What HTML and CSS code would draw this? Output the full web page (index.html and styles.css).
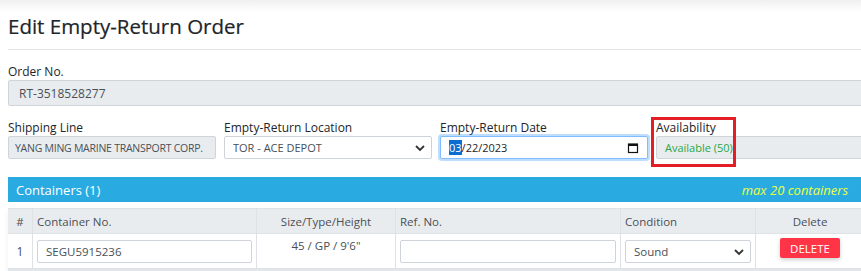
FILE: index.html
```html
<!DOCTYPE html>
<html lang="en">
  <head>
    <meta charset="UTF-8" />
    <meta name="viewport" content="width=device-width, initial-scale=1.0" />
    <title>Edit Empty-Return Order</title>
    <link rel="stylesheet" href="styles.css">
  </head>
  <body>
    <!-- shadow of the top navbar -->
    <div class="top-shade"></div>

    <div class="page">
      <h3 class="title">Edit Empty-Return Order</h3>
      <hr class="divider" />

      <div class="field">
        <label class="label">Order No.</label>
        <input class="input input-lg" type="text" value="RT-3518528277" readonly />
      </div>

      <div class="form-row">
        <div class="field">
          <label class="label">Shipping Line</label>
          <input class="input tight" type="text" value="YANG MING MARINE TRANSPORT CORP." readonly />
        </div>
        <div class="field">
          <label class="label">Empty-Return Location</label>
          <div class="select-wrap">
            <select class="input select">
              <option>TOR - ACE DEPOT</option>
            </select>
            <svg class="chevron" width="12" height="12" viewBox="0 0 12 12"><path d="M2 4l4 4 4-4" fill="none" stroke="#333" stroke-width="1.8"/></svg>
          </div>
        </div>
        <div class="field">
          <label class="label">Empty-Return Date</label>
          <div class="input date focused">
            <span><span class="seg-sel">03</span>/22/2023</span>
            <svg class="cal" width="12" height="12" viewBox="0 0 12 12">
              <rect x="1.5" y="2" width="9" height="8.5" fill="none" stroke="#111" stroke-width="1.2"/>
              <rect x="1.5" y="2" width="9" height="2" fill="#111"/>
            </svg>
          </div>
        </div>
        <div class="field highlight">
          <label class="label">Availability</label>
          <div class="input readonly-box available">Available (50)</div>
          <!-- red annotation box -->
          <div class="mark"></div>
        </div>
      </div>

      <div class="bar">
        <span class="bar-title">Containers (1)</span>
        <span class="bar-note">max 20 containers</span>
      </div>

      <div class="table-card">
        <table class="grid">
          <thead>
            <tr>
              <th class="c-num">#</th>
              <th class="c-cont">Container No.</th>
              <th class="c-size center">Size/Type/Height</th>
              <th class="c-ref">Ref. No.</th>
              <th class="c-cond">Condition</th>
              <th class="c-del center">Delete</th>
            </tr>
          </thead>
          <tbody>
            <tr>
              <td class="c-num">1</td>
              <td><input class="input cell-input" type="text" value="SEGU5915236" /></td>
              <td class="center size-text">45 / GP / 9'6"</td>
              <td><input class="input cell-input" type="text" value="" /></td>
              <td>
                <div class="select-wrap">
                  <select class="input select cell-input">
                    <option>Sound</option>
                  </select>
                  <svg class="chevron" width="12" height="12" viewBox="0 0 12 12"><path d="M2 4l4 4 4-4" fill="none" stroke="#333" stroke-width="1.8"/></svg>
                </div>
              </td>
              <td class="center del-cell"><button class="btn-delete">DELETE</button></td>
            </tr>
          </tbody>
        </table>
      </div>
    </div>
  </body>
</html>
```

FILE: styles.css
```css
html,
body {
  margin: 0;
  overflow: hidden;
}

body {
  background-color: white;
  color: #212529;
  font-family: "Open Sans", "Noto Sans", sans-serif;
  font-size: 12px;
}

/* navbar shadow at the very top */
.top-shade {
  height: 12px;
  background: linear-gradient(#f0f0f0, #ffffff);
}

.page {
  width: 856px;
  padding: 0 8px;
}

.title {
  margin: 2px 0 0;
  font-size: 20.5px;
  font-weight: 500;
  line-height: 24px;
  color: #212529;
  -webkit-text-stroke: 0.2px #212529;
}

.divider {
  margin: 11px 0 14px;
  border: 0;
  border-top: 1px solid #e3e3e3;
}

/* Form fields */
.field {
  display: flex;
  flex-direction: column;
}

.label {
  font-size: 12px;
  line-height: 15px;
  margin-bottom: 1px;
  color: #212529;
}

.input {
  box-sizing: border-box;
  height: 23px;
  width: 100%;
  margin: 0;
  padding: 0 8px;
  border: 1px solid #ced4da;
  border-radius: 2px;
  background-color: white;
  color: #495057;
  font-family: inherit;
  font-size: 11px;
  outline: none;
}

.input[readonly],
.readonly-box {
  background-color: #e9ecef;
}

.input-lg {
  height: 26px;
  padding: 0 10px;
  font-size: 12px;
}

.tight {
  padding: 0 6px;
  font-size: 10.5px;
  letter-spacing: -0.25px;
}

.form-row {
  display: grid;
  grid-template-columns: repeat(4, 1fr);
  grid-gap: 8px;
  margin-top: 14px;
}

.readonly-box {
  display: flex;
  align-items: center;
}

.available {
  color: #28a745;
}

/* selects with a chevron */
.select-wrap {
  position: relative;
}

.select {
  -webkit-appearance: none;
  appearance: none;
  padding-right: 24px;
}

.chevron {
  position: absolute;
  right: 6px;
  top: 6px;
  pointer-events: none;
}

/* date field shown focused */
.date {
  display: flex;
  align-items: center;
  justify-content: space-between;
  color: #212529;
}

.focused {
  border-color: #80bdff;
  box-shadow: 0 0 0 2px rgba(0, 123, 255, 0.25);
}

.seg-sel {
  background-color: #0a6ed1;
  color: white;
}

.highlight {
  position: relative;
}

.mark {
  position: absolute;
  left: -5px;
  top: -3px;
  width: 79px;
  height: 44px;
  border: 3px solid #e31e26;
}

/* Containers bar */
.bar {
  display: flex;
  justify-content: space-between;
  align-items: center;
  height: 25px;
  margin-top: 18px;
  padding: 0 16px 0 8px;
  background-color: #29abe2;
}

.bar-title {
  color: white;
  font-size: 13px;
}

.bar-note {
  color: #eeff41;
  font-style: italic;
  font-size: 13px;
}

/* Containers table */
.table-card {
  margin-top: 6px;
  border-bottom: 2px solid #e3e6e9;
  box-shadow: 0 3px 5px rgba(0, 0, 0, 0.06);
}

.grid {
  width: 100%;
  border-collapse: collapse;
  table-layout: fixed;
}

.grid th,
.grid td {
  border: 1px solid #dee2e6;
  padding: 0 4px;
  text-align: left;
  font-weight: 400;
  color: #495057;
}

.grid th {
  height: 24px;
  background-color: #e9ecef;
  font-size: 11.5px;
}

.grid td {
  height: 30px;
}

.grid th:first-child,
.grid td:first-child {
  border-left: 0;
}

.grid th:last-child,
.grid td:last-child {
  border-right: 0;
}

.grid .center {
  text-align: center;
}

.c-num {
  width: 16px;
  text-align: center !important;
}

.c-cont {
  width: 215px;
}

.c-size {
  width: 130px;
}

.c-ref {
  width: 216px;
}

.c-cond {
  width: 126px;
}

.cell-input {
  height: 23px;
  font-size: 11.5px;
}

.size-text {
  vertical-align: top;
  padding-top: 4px !important;
  font-size: 11.5px;
}

.del-cell {
  vertical-align: top;
  padding-top: 4px !important;
}

.btn-delete {
  width: 60px;
  height: 20px;
  border: 0;
  border-radius: 2px;
  background-color: #ff3547;
  color: white;
  font-family: inherit;
  font-size: 11.5px;
  box-shadow: 0 2px 4px rgba(0, 0, 0, 0.18);
  padding: 0;
}
```
